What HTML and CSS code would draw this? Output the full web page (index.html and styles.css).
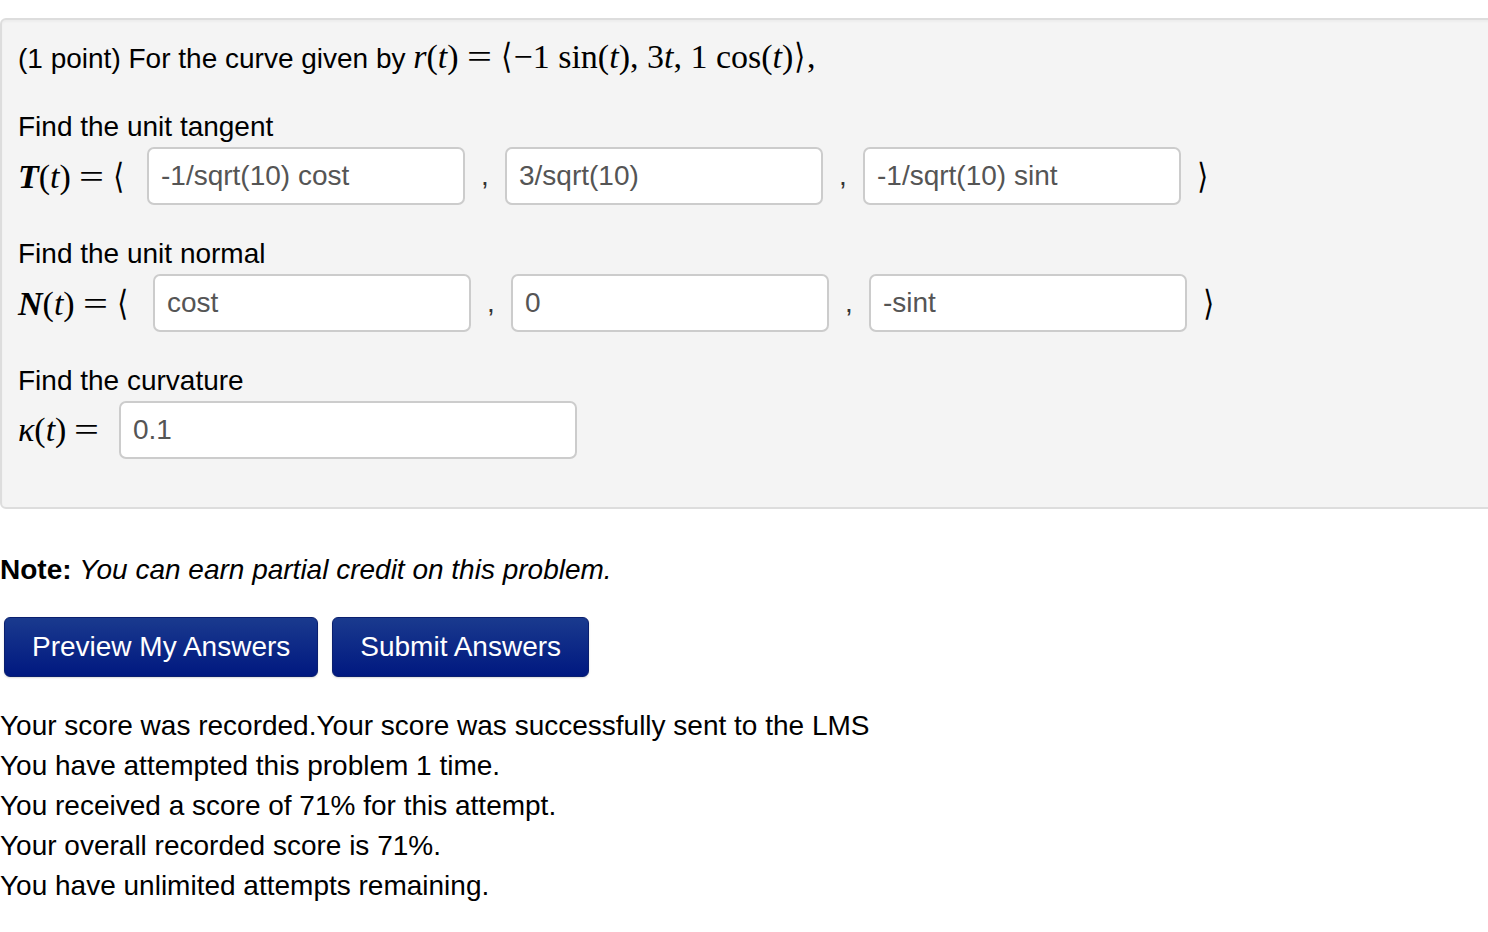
FILE: index.html
```html
<!DOCTYPE html>
<html>
<head>
<meta charset="utf-8">
<link rel="stylesheet" href="styles.css">
</head>
<body>
<div class="page">
  <div class="panel">
    <p class="title">(1 point) For the curve given by <span class="math"><i>r</i>(<i>t</i>)<span class="rel">=</span><span class="br">⟨</span>−1 sin(<i>t</i>), 3<i>t</i>, 1 cos(<i>t</i>)<span class="br">⟩</span>,</span></p>

    <p class="label">Find the unit tangent</p>
    <div class="row">
      <span class="math lhs lhs-t"><b><i>T</i></b>(<i>t</i>)<span class="rel">=</span><span class="br">⟨</span></span>
      <span class="field">-1/sqrt(10) cost</span>
      <span class="sep">,</span>
      <span class="field">3/sqrt(10)</span>
      <span class="sep">,</span>
      <span class="field">-1/sqrt(10) sint</span>
      <span class="math rb"><span class="br">⟩</span></span>
    </div>

    <p class="label">Find the unit normal</p>
    <div class="row">
      <span class="math lhs lhs-n"><b><i>N</i></b>(<i>t</i>)<span class="rel">=</span><span class="br">⟨</span></span>
      <span class="field">cost</span>
      <span class="sep">,</span>
      <span class="field">0</span>
      <span class="sep">,</span>
      <span class="field">-sint</span>
      <span class="math rb"><span class="br">⟩</span></span>
    </div>

    <p class="label">Find the curvature</p>
    <div class="row">
      <span class="math lhs lhs-k"><i>κ</i>(<i>t</i>)<span class="rel">=</span></span>
      <span class="field wide">0.1</span>
    </div>
  </div>

  <p class="note"><b>Note:</b> <i>You can earn partial credit on this problem.</i></p>

  <div class="buttons">
    <span class="btn">Preview My Answers</span>
    <span class="btn">Submit Answers</span>
  </div>

  <div class="score">
    <div>Your score was recorded.Your score was successfully sent to the LMS</div>
    <div>You have attempted this problem 1 time.</div>
    <div>You received a score of 71% for this attempt.</div>
    <div>Your overall recorded score is 71%.</div>
    <div>You have unlimited attempts remaining.</div>
  </div>
</div>
</body>
</html>
```
FILE: styles.css
```css
html, body {
  margin: 0;
  padding: 0;
  background: #fff;
  overflow: hidden;
}
body {
  font-family: "Liberation Sans", Arial, Helvetica, sans-serif;
  font-size: 28px;
  color: #000;
}
.page {
  padding-top: 18px;
}
.panel {
  background: #f4f4f4;
  border: 2px solid #dddddd;
  border-radius: 6px 0 0 6px;
  margin-right: -20px;
  padding: 16px 16px 48px 16px;
  box-shadow: inset 0 2px 2px rgba(0,0,0,0.03);
}
.panel p {
  margin: 0;
  line-height: 40px;
}
.title {
  margin-bottom: 28px !important;
}
.math {
  font-family: "Liberation Serif", "Times New Roman", "DejaVu Serif", serif;
  font-size: 34px;
}
.math b { font-weight: bold; }
.rel {
  display: inline-block;
  margin: 0 9px;
  transform: scaleX(1.3);
  padding: 0 2px;
}
.br {
  font-family: "DejaVu Serif", "Liberation Serif", serif;
  font-weight: normal;
  font-size: 35px;
  display: inline-block;
  transform: scaleX(0.8);
}
.row {
  display: flex;
  align-items: center;
  height: 58px;
  margin-bottom: 29px;
}
.row:last-child {
  margin-bottom: 0;
}
.lhs {
  flex: none;
  white-space: pre;
}
.lhs-t { width: 129px; }
.lhs-n { width: 135px; }
.lhs-k { width: 101px; }
.field {
  box-sizing: border-box;
  flex: none;
  width: 318px;
  height: 58px;
  background: #fff;
  border: 2px solid #cccccc;
  border-radius: 7px;
  padding: 0 12px;
  color: #555;
  display: flex;
  align-items: center;
  font-size: 28px;
}
.field.wide {
  width: 458px;
}
.sep {
  width: 40px;
  text-align: center;
  color: #333;
}
.rb {
  margin-left: 15px;
}
.note {
  margin: 41px 0 0 0;
  line-height: 40px;
}
.buttons {
  display: flex;
  gap: 14px;
  margin-top: 27px;
  padding-left: 4px;
}
.btn {
  box-sizing: border-box;
  height: 60px;
  padding: 0 27px;
  display: flex;
  align-items: center;
  color: #fff;
  background: linear-gradient(to bottom, #1a3a8e, #001880);
  border: 1px solid #0a1f6e;
  border-radius: 6px;
  box-shadow: 0 1px 2px rgba(0,0,0,0.15);
}
.score {
  margin-top: 29px;
  line-height: 40px;
}
```
